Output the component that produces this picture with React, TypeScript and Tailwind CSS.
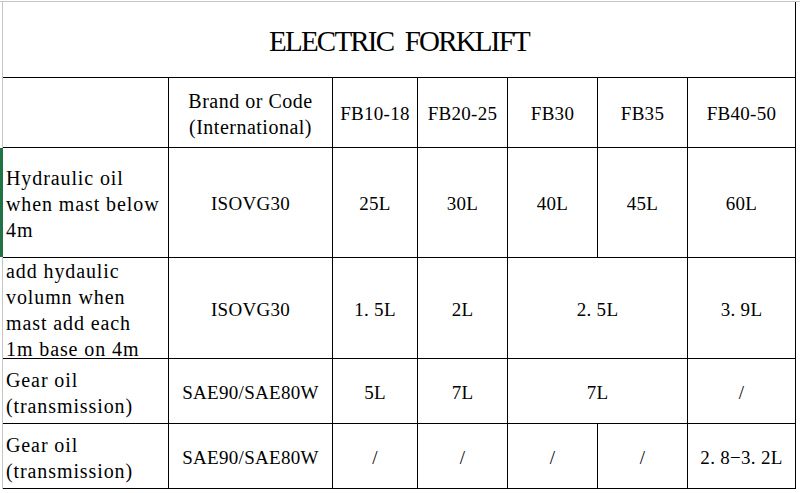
import React from "react";

const font = { fontFamily: '"Liberation Serif", "DejaVu Serif", serif' };

function C({ children, className = "" }: { children?: React.ReactNode; className?: string }) {
  return (
    <div
      className={`border-r border-b border-black flex items-center justify-center text-center pt-[3px] text-[19px] leading-[26px] tracking-[0.3px] text-black ${className}`}
    >
      {children}
    </div>
  );
}

function L({ children, className = "" }: { children?: React.ReactNode; className?: string }) {
  return (
    <div
      className={`border-r border-b border-black flex flex-col justify-center items-start pl-[3px] pt-[3px] text-[20px] leading-[26px] tracking-[0.9px] text-black ${className}`}
    >
      {children}
    </div>
  );
}

export default function App() {
  return (
    <div className="w-[800px] h-[493px] bg-white overflow-hidden relative" style={font}>
      <div className="mt-[1px] border-t border-[#c6c6c6] w-[800px]">
        <div className="ml-[2px] border-l border-[#c6c6c6] w-[794px]">
          <div className="grid grid-cols-[166px_164px_85px_90px_90px_90px_108px] grid-rows-[76px_70px_110px_101px_65px_65px] w-[793px]">
            <div className="col-span-7 border-r border-b border-black flex items-center justify-center text-[29px] tracking-[-1.8px] [word-spacing:6px] text-black pt-[4px]">
              ELECTRIC FORKLIFT
            </div>

            <C />
            <C className="flex-col text-[20px] tracking-[0.5px]">
              <span>Brand or Code</span>
              <span>(International)</span>
            </C>
            <C>FB10-18</C>
            <C>FB20-25</C>
            <C>FB30</C>
            <C>FB35</C>
            <C>FB40-50</C>

            <L className="relative">
              <div className="absolute left-[-3px] top-0 bottom-0 w-[3px] bg-[#217346]" />
              <span>Hydraulic oil</span>
              <span>when mast below</span>
              <span>4m</span>
            </L>
            <C className="tracking-[-0.6px]">ISOVG30</C>
            <C>25L</C>
            <C>30L</C>
            <C>40L</C>
            <C>45L</C>
            <C>60L</C>

            <L>
              <span>add hydaulic</span>
              <span>volumn when</span>
              <span>mast add each</span>
              <span>1m base on 4m</span>
            </L>
            <C className="tracking-[-0.6px]">ISOVG30</C>
            <C>1. 5L</C>
            <C>2L</C>
            <C className="col-span-2">2. 5L</C>
            <C>3. 9L</C>

            <L>
              <span>Gear oil</span>
              <span>(transmission)</span>
            </L>
            <C className="tracking-[-1.4px]">SAE90/SAE80W</C>
            <C>5L</C>
            <C>7L</C>
            <C className="col-span-2">7L</C>
            <C className="text-[#666]">/</C>

            <L>
              <span>Gear oil</span>
              <span>(transmission)</span>
            </L>
            <C className="tracking-[-1.4px]">SAE90/SAE80W</C>
            <C className="text-[#666]">/</C>
            <C className="text-[#666]">/</C>
            <C className="text-[#666]">/</C>
            <C className="text-[#666]">/</C>
            <C className="tracking-[-0.3px]">2. 8−3. 2L</C>
          </div>
        </div>
      </div>
    </div>
  );
}
